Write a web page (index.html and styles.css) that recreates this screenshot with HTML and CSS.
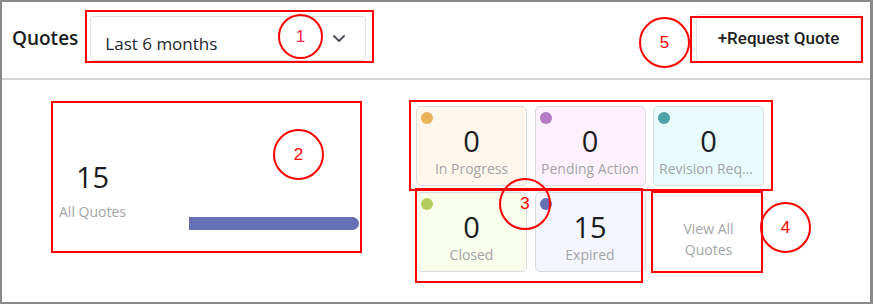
FILE: index.html
```html
<!DOCTYPE html>
<html lang="en">
<head>
<meta charset="utf-8">
<title>Quotes</title>
<link rel="stylesheet" href="styles.css">
</head>
<body>
<div class="frame">
  <header class="header">
    <h1 class="title">Quotes</h1>
    <div class="select">
      <span class="select-text">Last 6 months</span>
      <svg class="chevron" width="12" height="7" viewBox="0 0 12 7"><path d="M1 1l5 5 5-5" fill="none" stroke="#4a4f55" stroke-width="1.8" stroke-linecap="round" stroke-linejoin="round"/></svg>
    </div>
    <button class="request">+Request Quote</button>
  </header>
  <main class="content">
    <section class="summary">
      <div class="stat">
        <div class="stat-num">15</div>
        <div class="stat-label">All Quotes</div>
      </div>
      <div class="bar"></div>
    </section>
    <section class="cards">
      <div class="card c-progress"><span class="dot"></span><div class="num">0</div><div class="label">In Progress</div></div>
      <div class="card c-pending"><span class="dot"></span><div class="num">0</div><div class="label">Pending Action</div></div>
      <div class="card c-revision"><span class="dot"></span><div class="num">0</div><div class="label">Revision Requested</div></div>
      <div class="card c-closed"><span class="dot"></span><div class="num">0</div><div class="label">Closed</div></div>
      <div class="card c-expired"><span class="dot"></span><div class="num">15</div><div class="label">Expired</div></div>
      <div class="card view-all"><span class="view-text">View All Quotes</span></div>
    </section>
  </main>

  <div class="mark box b1"></div>
  <div class="mark box b5"></div>
  <div class="mark box b2"></div>
  <div class="mark box b3a"></div>
  <div class="mark box b3b"></div>
  <div class="mark box b4"></div>
  <div class="mark ring r1">1</div>
  <div class="mark ring r2">2</div>
  <div class="mark ring r3">3</div>
  <div class="mark ring r4">4</div>
  <div class="mark ring r5">5</div>
</div>
</body>
</html>
```

FILE: styles.css
```css
* { box-sizing: border-box; }
html, body { margin: 0; padding: 0; background: #fff; }
body { font-family: "Open Sans", "Noto Sans", sans-serif; color: #1d1f22; }

.frame {
  position: relative;
  width: 873px;
  height: 304px;
  border-style: solid;
  border-color: #898989;
  border-width: 2px 3px 2px 2px;
  background: #fff;
  overflow: hidden;
}

.header {
  height: 78px;
  display: flex;
  align-items: center;
  padding: 0 9px 4px 10px;
  border-bottom: 2px solid #d3d6d6;
}
.title {
  margin: 0;
  font-size: 19px;
  font-weight: 600;
  color: #1b1d20;
}
.select {
  margin-left: 12px;
  width: 276px;
  height: 45px;
  border: 1px solid #dcdfe0;
  border-radius: 4px;
  display: flex;
  align-items: center;
  justify-content: space-between;
  padding: 0 20px 0 14px;
}
.select-text {
  margin-top: 11px;
  font-size: 17px;
  line-height: 23px;
  color: #23272b;
}
.chevron { display: block; }
.request {
  margin-left: auto;
  width: 165px;
  height: 48px;
  background: #fff;
  border: 1px solid #e4e6e6;
  border-radius: 2px;
  font-family: Roboto, "Liberation Sans", sans-serif;
  font-size: 17px;
  font-weight: 500;
  color: #1c1f23;
  padding: 0;
}

.content {
  display: flex;
  align-items: flex-start;
  padding-top: 26px;
}
.summary {
  margin-left: 57px;
  width: 300px;
  margin-top: 53px;
  display: flex;
  align-items: flex-start;
}
.stat {
  display: flex;
  flex-direction: column;
  align-items: center;
}
.stat-num {
  font-size: 29px;
  line-height: 36px;
  font-weight: 500;
  color: #1b1d20;
}
.stat-label {
  margin-top: 7px;
  font-size: 14px;
  line-height: 20px;
  color: #a3a5a7;
}
.bar {
  margin-left: auto;
  margin-top: 58px;
  width: 170px;
  height: 13px;
  background: #6670b5;
  border-radius: 0 7px 7px 0;
}

.cards {
  margin-left: 57px;
  display: grid;
  grid-template-columns: 111px 111px 111px;
  grid-auto-rows: 80px;
  column-gap: 7.5px;
  row-gap: 6px;
}
.card {
  border: 1px solid #d9dcdd;
  border-radius: 5px;
  padding: 5px 4px 0;
  display: flex;
  flex-direction: column;
  min-width: 0;
}
.dot {
  display: block;
  width: 12px;
  height: 12px;
  border-radius: 50%;
}
.num {
  margin-top: 1px;
  text-align: center;
  font-size: 29px;
  line-height: 32px;
  font-weight: 500;
  color: #1b1d20;
}
.label {
  margin: 2px -2px 0;
  text-align: center;
  font-size: 14px;
  line-height: 20px;
  color: #a3a5a7;
  white-space: nowrap;
  overflow: hidden;
  text-overflow: ellipsis;
}
.c-progress { background: #fff7ec; }
.c-progress .dot { background: #e8b35c; }
.c-pending { background: #fdf1fd; }
.c-pending .dot { background: #b37bc4; }
.c-revision { background: #e8fcfd; }
.c-revision .dot { background: #4ca2a8; }
.c-revision .label { text-align: left; margin: 2px 0 0; padding-left: 1px; }
.c-closed { background: #f9fdec; }
.c-closed .dot { background: #b5cd5d; }
.c-expired { background: #f4f5fd; }
.c-expired .dot { background: #6670b5; }
.view-all {
  background: #fff;
  border-color: #eef0f0;
  align-items: center;
  justify-content: center;
  padding: 13px 0 0;
}
.view-text {
  width: 60px;
  text-align: center;
  font-size: 14px;
  line-height: 21px;
  color: #a3a5a7;
}

/* annotation overlays (coordinates relative to frame padding box) */
.mark { position: absolute; pointer-events: none; }
.box { border: 2px solid #ff0000; }
.b1 { left: 83px; top: 8px; width: 289px; height: 53px; }
.b5 { left: 688px; top: 14px; width: 173px; height: 47px; }
.b2 { left: 49px; top: 99px; width: 311px; height: 152px; }
.b3a { left: 407px; top: 98px; width: 364px; height: 91px; }
.b3b { left: 413px; top: 186px; width: 228px; height: 95px; }
.b4 { left: 649px; top: 189px; width: 112px; height: 82px; }

.ring {
  border: 2px solid #ff0000;
  border-radius: 50%;
  display: flex;
  align-items: center;
  justify-content: center;
  font-family: "Liberation Sans", Arial, sans-serif;
  font-size: 17px;
  color: #ff0000;
}
.r1 { left: 276px; top: 12px; width: 45px; height: 45px; color: #ee2a4c; }
.r2 { left: 271px; top: 127px; width: 51px; height: 51px; }
.r3 { left: 497px; top: 176px; width: 52px; height: 52px; }
.r4 { left: 758px; top: 200px; width: 51px; height: 51px; }
.r5 { left: 637px; top: 15px; width: 51px; height: 51px; }
```
